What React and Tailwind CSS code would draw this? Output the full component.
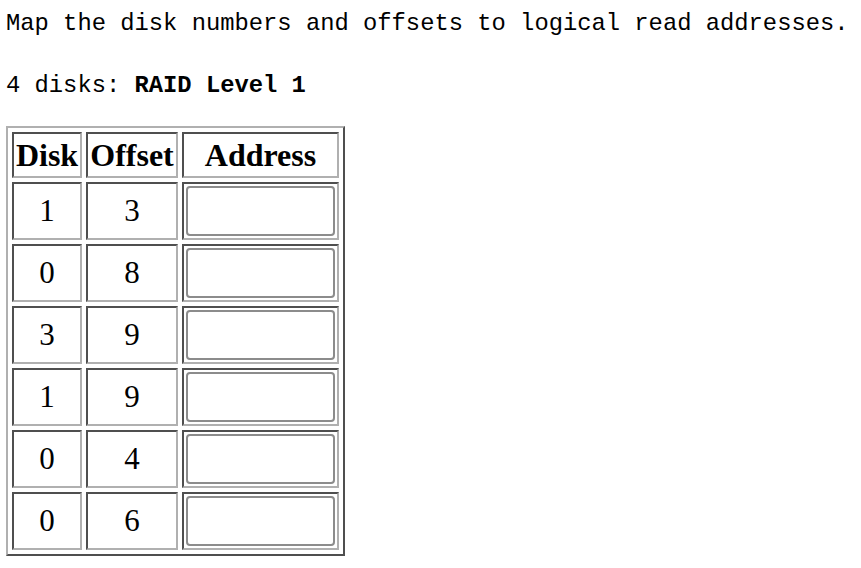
import React from 'react';

const rows = [
  { disk: 1, offset: 3 },
  { disk: 0, offset: 8 },
  { disk: 3, offset: 9 },
  { disk: 1, offset: 9 },
  { disk: 0, offset: 4 },
  { disk: 0, offset: 6 },
];

const cell =
  'border-2 border-t-[#4f4f4f] border-l-[#4f4f4f] border-b-[#b0b0b0] border-r-[#b0b0b0] bg-white text-center align-middle';

export default function App() {
  return (
    <div className="min-h-screen bg-white text-black px-[6px] pt-[10px]">
      <p className="text-[23.8px] leading-[27px]" style={{ fontFamily: '"Liberation Mono", monospace' }}>
        Map the disk numbers and offsets to logical read addresses.
      </p>
      <p className="mt-[35px] text-[23.8px] leading-[27px]" style={{ fontFamily: '"Liberation Mono", monospace' }}>
        4 disks: <b>RAID Level 1</b>
      </p>
      <table
        className="mt-[27px] border-separate border-spacing-1 border-2 border-t-[#b0b0b0] border-l-[#b0b0b0] border-b-[#4f4f4f] border-r-[#4f4f4f] text-[31px]"
        style={{ fontFamily: '"Liberation Serif", serif' }}
      >
        <thead>
          <tr>
            <th className={`${cell} w-[70px] h-[46px] p-0 font-bold text-[32px] leading-[42px]`}>Disk</th>
            <th className={`${cell} w-[92px] h-[46px] p-0 font-bold text-[32px] leading-[42px]`}>Offset</th>
            <th className={`${cell} w-[157px] h-[46px] p-0 font-bold text-[32px] leading-[42px]`}>Address</th>
          </tr>
        </thead>
        <tbody>
          {rows.map((r, i) => (
            <tr key={i}>
              <td className={`${cell} h-[58px] p-0`}>{r.disk}</td>
              <td className={`${cell} h-[58px] p-0`}>{r.offset}</td>
              <td className={`${cell} h-[58px] p-[2px]`}>
                <input
                  type="text"
                  className="block w-full h-[50px] border-2 border-[#8c8c8c] rounded-[4px] bg-white outline-none"
                />
              </td>
            </tr>
          ))}
        </tbody>
      </table>
    </div>
  );
}
